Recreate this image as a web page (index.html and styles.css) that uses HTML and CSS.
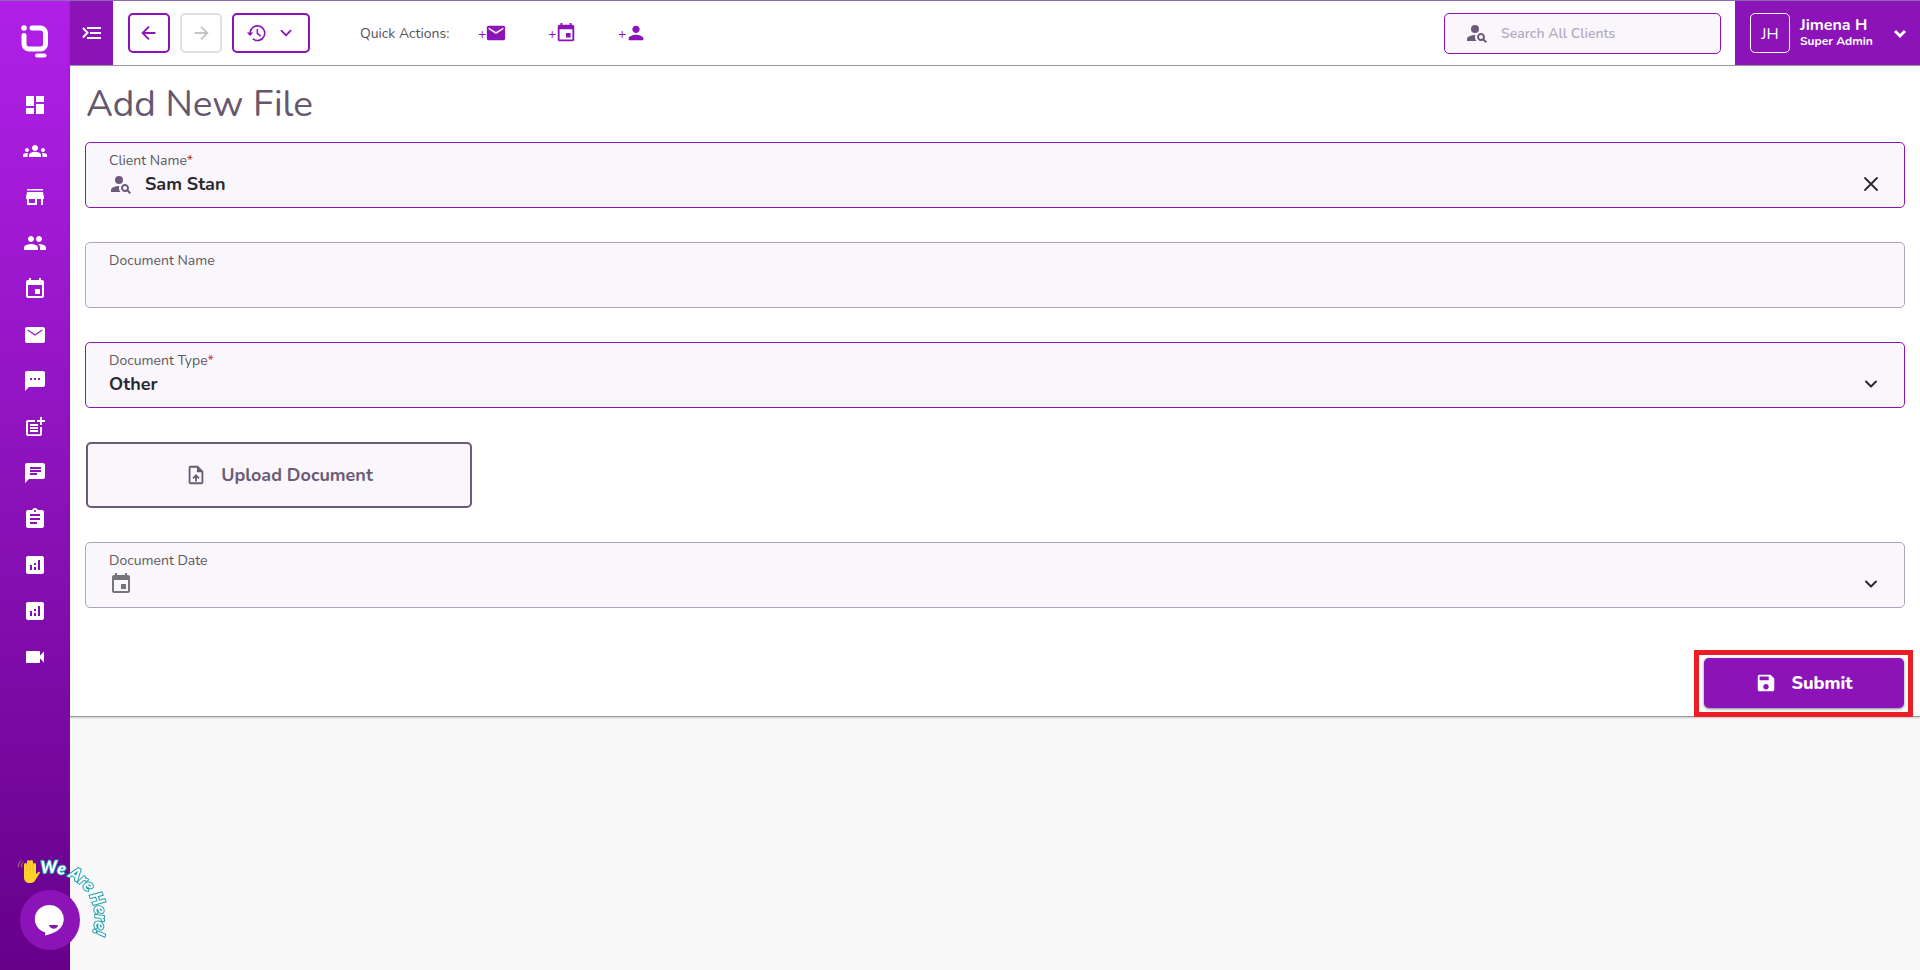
FILE: index.html
```html
<!DOCTYPE html>
<html lang="en">
<head>
    <meta charset="UTF-8">
    <meta name="viewport" content="width=device-width, initial-scale=1.0">
    <title>Add New File</title>
    <link rel="stylesheet" href="styles.css">
</head>
<body>
    <!-- shared icons -->
    <svg class="icon-defs" aria-hidden="true">
        <symbol id="i-mail" viewBox="0 0 24 24"><path d="M20 4H4c-1.1 0-2 .9-2 2v12c0 1.1.9 2 2 2h16c1.1 0 2-.9 2-2V6c0-1.1-.9-2-2-2zm0 4l-8 5-8-5V6l8 5 8-5v2z"/></symbol>
        <symbol id="i-mail-thin" viewBox="0 0 24 24"><path d="M20 4H4c-1.1 0-2 .9-2 2v12c0 1.1.9 2 2 2h16c1.1 0 2-.9 2-2V6c0-1.1-.9-2-2-2zm-.4 3.600L12 12.700 4.400 7.600l.6-1L12 11.200l7-4.600z"/></symbol>
        <symbol id="i-event" viewBox="0 0 24 24"><path d="M17 12h-5v5h5v-5zM16 1v2H8V1H6v2H5c-1.110 0-1.990.9-1.990 2L3 19c0 1.100.89 2 2 2h14c1.100 0 2-.9 2-2V5c0-1.100-.9-2-2-2h-1V1h-2zm3 18H5V8h14v11z"/></symbol>
        <symbol id="i-person" viewBox="0 0 24 24"><path d="M12 12c2.210 0 4-1.790 4-4s-1.790-4-4-4-4 1.790-4 4 1.790 4 4 4zm0 2c-2.670 0-8 1.340-8 4v2h16v-2c0-2.660-5.330-4-8-4z"/></symbol>
        <symbol id="i-person-search" viewBox="0 0 24 24"><circle cx="10" cy="8" r="4"/><path d="M10.350 14.010C7.620 13.910 2 15.270 2 18v2h9.540c-2.470-2.760-1.230-5.890-1.190-5.990zM19.430 18.020c.36-.59.57-1.280.57-2.020 0-2.210-1.790-4-4-4s-4 1.790-4 4 1.790 4 4 4c.74 0 1.430-.22 2.020-.57L20.590 22 22 20.590l-2.570-2.570zM16 18c-1.100 0-2-.9-2-2s.9-2 2-2 2 .9 2 2-.9 2-2 2z"/></symbol>
        <symbol id="i-chevron" viewBox="0 0 24 24"><path d="M7 9.500l5 5 5-5" fill="none" stroke="currentColor" stroke-width="2" stroke-linecap="round" stroke-linejoin="round"/></symbol>
        <symbol id="i-chart" viewBox="0 0 24 24"><path d="M19 3H5c-1.100 0-2 .9-2 2v14c0 1.100.9 2 2 2h14c1.100 0 2-.9 2-2V5c0-1.100-.9-2-2-2zM9 17H7v-5h2v5zm4 0h-2v-3h2v3zm0-5h-2v-2h2v2zm4 5h-2V7h2v10z"/></symbol>
    </svg>

    <aside class="sidebar">
        <a href="#" class="logo" aria-label="Home">
            <svg width="28" height="34" viewBox="0 0 28 34">
                <g fill="none" stroke="#fff" stroke-width="5" stroke-linecap="round">
                    <path d="M3 10.500v8.500a5 5 0 0 0 5 5h11.500a5 5 0 0 0 5-5V8a5 5 0 0 0-5-5h-8.500"/>
                    <path d="M16 30.500h7.500" stroke-width="4"/>
                </g>
                <circle cx="3" cy="3" r="2.800" fill="#fff"/>
            </svg>
        </a>
        <nav class="side-nav">
            <a href="#" aria-label="Dashboard"><svg class="icon" viewBox="0 0 24 24"><path d="M3 13h8V3H3v10zm0 8h8v-6H3v6zm10 0h8V11h-8v10zm0-18v6h8V3h-8z"/></svg></a>
            <a href="#" aria-label="Groups"><svg class="icon" viewBox="0 0 24 24"><path d="M12 12.750c1.630 0 3.070.39 4.240.9 1.080.48 1.760 1.560 1.760 2.730V18H6v-1.610c0-1.180.68-2.260 1.760-2.730 1.170-.52 2.610-.91 4.240-.91zM4 13c1.100 0 2-.9 2-2s-.9-2-2-2-2 .9-2 2 .9 2 2 2zm1.130 1.100C4.760 14.040 4.390 14 4 14c-.99 0-1.930.21-2.780.58C.48 14.900 0 15.620 0 16.430V18h4.500v-1.610c0-.83.23-1.610.63-2.290zM20 13c1.100 0 2-.9 2-2s-.9-2-2-2-2 .9-2 2 .9 2 2 2zm4 3.430c0-.81-.48-1.530-1.220-1.850-.85-.37-1.790-.58-2.780-.58-.39 0-.76.04-1.130.1.400.68.630 1.460.630 2.290V18H24v-1.570zM12 6c1.660 0 3 1.340 3 3s-1.340 3-3 3-3-1.340-3-3 1.340-3 3-3z"/></svg></a>
            <a href="#" aria-label="Store"><svg class="icon" viewBox="0 0 24 24"><path d="M4 4h16v1.600H4zM20 7H4l-1 5v2h1v6h10v-6h4v6h2v-6h1v-2l-1-5zm-8 11H6v-4h6v4z"/></svg></a>
            <a href="#" aria-label="People"><svg class="icon" viewBox="0 0 24 24"><path d="M16 11c1.660 0 2.990-1.340 2.990-3S17.660 5 16 5s-3 1.340-3 3 1.340 3 3 3zm-8 0c1.660 0 2.990-1.340 2.990-3S9.660 5 8 5 5 6.340 5 8s1.340 3 3 3zm0 2c-2.330 0-7 1.170-7 3.500V19h14v-2.500c0-2.330-4.670-3.500-7-3.500zm8 0c-.29 0-.62.02-.97.05 1.160.84 1.970 1.970 1.970 3.450V19h6v-2.500c0-2.330-4.670-3.500-7-3.500z"/></svg></a>
            <a href="#" aria-label="Calendar"><svg class="icon"><use href="#i-event"/></svg></a>
            <a href="#" aria-label="Mail"><svg class="icon"><use href="#i-mail-thin"/></svg></a>
            <a href="#" aria-label="Messages"><svg class="icon" viewBox="0 0 24 24"><path d="M20 2H4c-1.100 0-2 .9-2 2v18l4-4h14c1.100 0 2-.9 2-2V4c0-1.100-.9-2-2-2zM9 11H7V9h2v2zm4 0h-2V9h2v2zm4 0h-2V9h2v2z"/></svg></a>
            <a href="#" aria-label="New post"><svg class="icon" viewBox="0 0 24 24"><path d="M17 19.220H5V7h7V5H5c-1.100 0-2 .9-2 2v12c0 1.100.9 2 2 2h12c1.100 0 2-.9 2-2v-7h-2v7.220zM19 2h-2v3h-3v2h3v2.990h2V7h3V5h-3V2zM7 9h8v2H7zM7 12h8v2H7zM7 15h8v2H7z"/></svg></a>
            <a href="#" aria-label="Chat"><svg class="icon" viewBox="0 0 24 24"><path d="M20 2H4c-1.100 0-2 .9-2 2v18l4-4h14c1.100 0 2-.9 2-2V4c0-1.100-.9-2-2-2zM7 6h11v2H7zM7 9h11v2H7zM14 14H7v-2h7v2z" fill-rule="evenodd"/></svg></a>
            <a href="#" aria-label="Tasks"><svg class="icon" viewBox="0 0 24 24"><path d="M19 3h-4.180C14.400 1.840 13.300 1 12 1s-2.400.84-2.820 2H5c-1.100 0-2 .9-2 2v14c0 1.100.9 2 2 2h14c1.100 0 2-.9 2-2V5c0-1.100-.9-2-2-2zm-7 0c.55 0 1 .45 1 1s-.45 1-1 1-1-.45-1-1 .45-1 1-1zm2 14H7v-2h7v2zm3-4H7v-2h10v2zm0-4H7V7h10v2z"/></svg></a>
            <a href="#" aria-label="Reports"><svg class="icon"><use href="#i-chart"/></svg></a>
            <a href="#" aria-label="Analytics"><svg class="icon"><use href="#i-chart"/></svg></a>
            <a href="#" aria-label="Video"><svg class="icon" viewBox="0 0 24 24"><path d="M17 10.500V7c0-.55-.45-1-1-1H4c-.55 0-1 .45-1 1v10c0 .55.45 1 1 1h12c.55 0 1-.45 1-1v-3.500l4 4v-11l-4 4z"/></svg></a>
        </nav>
    </aside>

    <div class="page">
        <header class="header">
            <button type="button" class="menu-toggle" aria-label="Toggle menu">
                <svg width="20" height="14" viewBox="0 0 20 14" fill="none" stroke="#fff" stroke-width="2"><path d="M1 2l4.500 4.700L1 11.500M5 2h14M8 7h11M5 12h14"/></svg>
            </button>
            <div class="history-buttons">
                <button type="button" class="nav-button" aria-label="Back"><svg class="icon" viewBox="0 0 24 24"><path d="M19 12H6M12 5l-7 7 7 7" fill="none" stroke="currentColor" stroke-width="2"/></svg></button>
                <button type="button" class="nav-button" aria-label="Forward" disabled><svg class="icon" viewBox="0 0 24 24"><path d="M5 12h13M12 5l7 7-7 7" fill="none" stroke="currentColor" stroke-width="2"/></svg></button>
                <button type="button" class="nav-button nav-history" aria-label="History">
                    <svg class="icon" viewBox="0 0 24 24"><path d="M5.500 12.500a8 8 0 1 1 3 6M13.500 7.500v5l3.500 3" fill="none" stroke="currentColor" stroke-width="1.700"/><path d="M2 11.500h7l-3.500 3.800z"/></svg>
                    <svg class="icon"><use href="#i-chevron"/></svg>
                </button>
            </div>
            <div class="quick-actions">
                <span class="quick-label">Quick Actions:</span>
                <button type="button" aria-label="New email"><span>+</span><svg class="icon-sm"><use href="#i-mail"/></svg></button>
                <button type="button" aria-label="New event"><span>+</span><svg class="icon-sm"><use href="#i-event"/></svg></button>
                <button type="button" aria-label="New client"><span>+</span><svg class="icon-sm"><use href="#i-person"/></svg></button>
            </div>
            <label class="search">
                <svg class="icon"><use href="#i-person-search"/></svg>
                <input type="search" placeholder="Search All Clients" aria-label="Search All Clients">
            </label>
            <button type="button" class="user-menu">
                <span class="avatar">JH</span>
                <span class="user-text">
                    <span class="user-name">Jimena H</span>
                    <span class="user-role">Super Admin</span>
                </span>
                <svg class="icon" viewBox="0 0 24 24"><path d="M7 10l5 5 5-5" fill="none" stroke="currentColor" stroke-width="3"/></svg>
            </button>
        </header>

        <main class="panel">
            <h1>Add New File</h1>
            <form class="file-form">
                <div class="field active">
                    <label for="client-name">Client Name<span class="required">*</span></label>
                    <div class="field-row">
                        <svg class="icon field-icon"><use href="#i-person-search"/></svg>
                        <input type="text" id="client-name" value="Sam Stan">
                        <button type="button" class="clear" aria-label="Clear client"><svg class="icon" viewBox="0 0 24 24"><path d="M6 6l12 12M18 6L6 18" fill="none" stroke="currentColor" stroke-width="1.800" stroke-linecap="round"/></svg></button>
                    </div>
                </div>
                <div class="field">
                    <label for="document-name">Document Name</label>
                    <div class="field-row">
                        <input type="text" id="document-name">
                    </div>
                </div>
                <div class="field active">
                    <label for="document-type">Document Type<span class="required">*</span></label>
                    <div class="field-row">
                        <select id="document-type">
                            <option>Other</option>
                        </select>
                        <svg class="icon"><use href="#i-chevron"/></svg>
                    </div>
                </div>
                <button type="button" class="upload">
                    <svg class="icon-sm" viewBox="0 0 24 24"><path d="M14 2H6c-1.100 0-2 .9-2 2v16c0 1.100.9 2 2 2h12c1.100 0 2-.9 2-2V8l-6-6zm4 18H6V4h7v5h5v11zM8 15.010l1.410 1.410L11 14.840V19h2v-4.160l1.590 1.590L16 15.010 12.010 11 8 15.010z"/></svg>
                    Upload Document
                </button>
                <div class="field">
                    <label for="document-date">Document Date</label>
                    <div class="field-row">
                        <svg class="icon date-icon"><use href="#i-event"/></svg>
                        <input type="text" id="document-date">
                        <svg class="icon"><use href="#i-chevron"/></svg>
                    </div>
                </div>
                <div class="submit-frame">
                    <button type="submit" class="submit">
                        <svg class="icon-sm" viewBox="0 0 24 24"><path d="M17 3H5c-1.110 0-2 .9-2 2v14c0 1.100.89 2 2 2h14c1.100 0 2-.9 2-2V7l-4-4zm-5 16c-1.660 0-3-1.340-3-3s1.340-3 3-3 3 1.340 3 3-1.340 3-3 3zm3-10H5V5h10v4z"/></svg>
                        Submit
                    </button>
                </div>
            </form>
        </main>
    </div>

    <!-- chat bubble -->
    <button type="button" class="chat-widget" aria-label="Open chat">
        <svg width="130" height="130" viewBox="0 0 130 130">
            <circle cx="50" cy="80" r="30" fill="#8b13b8"/>
            <path d="M50 65a14 14 0 0 1 7 26c-4 2.500-8 3.500-12 4.500l.3-3A14 14 0 0 1 50 65z" fill="#fff"/>
            <path d="M49 85h9c-.5 5-8 5-9 0z" fill="#8b13b8"/>
            <g fill="#fdd22b">
                <rect x="24" y="23" width="3" height="14" rx="1.500"/>
                <rect x="27" y="20" width="3" height="16" rx="1.500"/>
                <rect x="30" y="20" width="3" height="16" rx="1.500"/>
                <rect x="33" y="23" width="3" height="14" rx="1.500"/>
                <path d="M24 29l12 2v3l2.500-2c1-.5 2 0 1.200 1.200L36 39c-1.500 3-3 4-6 4-4 0-6-2-6-6z"/>
            </g>
            <path d="M27 24v7M30 23v8M33 24v7" stroke="#e5a91c" stroke-width=".5"/>
            <path d="M18.500 27c0-3 1-5.500 3-7M21.500 27c0-2.500.5-4 2-5.500" fill="none" stroke="#c59a55" stroke-width=".8"/>
            <path id="chat-arc" d="M41 34A45 45 0 0 1 87 104" fill="none"/>
            <text class="chat-text"><textPath href="#chat-arc">We Are Here!</textPath></text>
        </svg>
    </button>
</body>
</html>
```
FILE: styles.css
```css
* {
    box-sizing: border-box;
}
body {
    margin: 0;
    min-height: 100vh;
    display: flex;
    border-top: 1px solid #8c68b4;
    background-color: #f9f9f9;
    color: #2b2730;
    font-family: Nunito, "Open Sans", "Noto Sans", sans-serif;
    font-size: 14px;
}
button, input, select {
    font-family: inherit;
    font-size: inherit;
    color: inherit;
    margin: 0;
    padding: 0;
    border: none;
    background: none;
    min-width: 0;
}
button {
    cursor: pointer;
}
.icon-defs {
    position: absolute;
    width: 0;
    height: 0;
}
.icon, .icon-sm {
    display: block;
    flex: none;
    width: 24px;
    height: 24px;
    fill: currentColor;
}
.icon-sm {
    width: 22px;
    height: 22px;
}

/* sidebar */
.sidebar {
    flex: none;
    width: 70px;
    background: linear-gradient(#b020e8, #8c12ba 50%, #660089);
    color: white;
}
.logo {
    display: flex;
    justify-content: center;
    padding-top: 24px;
}
.side-nav {
    display: flex;
    flex-direction: column;
    align-items: center;
    gap: 22px;
    padding-top: 34px;
}
.side-nav a {
    color: white;
}

/* header */
.page {
    flex: 1;
    min-width: 0;
}
.header {
    display: flex;
    align-items: center;
    height: 65px;
    background-color: white;
    border-bottom: 1px solid #999;
    box-shadow: 0 1px 2px rgba(0, 0, 0, 0.2);
}
.menu-toggle {
    display: flex;
    align-items: center;
    justify-content: center;
    align-self: stretch;
    width: 43px;
    background-color: #8b13b8;
}
.history-buttons {
    display: flex;
    gap: 10px;
    margin-left: 15px;
}
.nav-button {
    display: flex;
    align-items: center;
    justify-content: center;
    width: 42px;
    height: 40px;
    border: 2px solid #8b13b8;
    border-radius: 5px;
    color: #8b13b8;
}
.nav-button .icon {
    width: 22px;
}
.nav-button:disabled {
    border-color: #e0e0e0;
    color: #c4c4c4;
}
.nav-history {
    width: 78px;
    gap: 8px;
}
.quick-actions {
    display: flex;
    align-items: center;
    margin-left: 50px;
}
.quick-label {
    width: 118px;
    color: #55505a;
}
.quick-actions button {
    display: flex;
    align-items: center;
    width: 70px;
    color: #8b13b8;
}
.quick-actions .icon-sm {
    margin-left: -1px;
}
.search {
    display: flex;
    align-items: center;
    gap: 12px;
    width: 277px;
    height: 41px;
    margin-left: auto;
    margin-right: 14px;
    padding: 0 20px;
    border: 1px solid #8b13b8;
    border-radius: 5px;
    background-color: #f9f7fb;
    color: #6d5a7b;
}
.search input {
    flex: 1;
    outline: none;
}
.search input::placeholder {
    color: #b5a9bf;
    font-weight: 600;
}
.user-menu {
    display: flex;
    align-items: center;
    align-self: stretch;
    width: 185px;
    padding: 0 8px 0 15px;
    background-color: #8b13b8;
    color: white;
    text-align: left;
}
.avatar {
    width: 40px;
    height: 40px;
    border: 1px solid white;
    border-radius: 5px;
    font-size: 16px;
    line-height: 40px;
    text-align: center;
}
.user-text {
    flex: 1;
    margin-left: 10px;
    padding-bottom: 2px;
    font-weight: 700;
    white-space: nowrap;
}
.user-name, .user-role {
    display: block;
    font-size: 16px;
    line-height: 18px;
}
.user-role {
    font-size: 12px;
    line-height: 14px;
}

/* form panel */
.panel {
    padding: 14px 15px 0;
    background-color: white;
    border-bottom: 1px solid #999;
    box-shadow: 0 1px 2px rgba(0, 0, 0, 0.2);
}
h1 {
    margin: 0 0 14px 1px;
    color: #655770;
    font-size: 37px;
    font-weight: 400;
    line-height: 48px;
}
.file-form {
    display: flex;
    flex-direction: column;
    gap: 34px;
}
.field {
    padding: 8px 21px 11px 23px;
    border: 1px solid #b0a4bb;
    border-radius: 5px;
    background-color: #f9f7fb;
}
.field.active {
    border-color: #8b13b8;
}
.field label {
    display: block;
    color: #5c5762;
    line-height: 20px;
}
.required {
    color: #c4353f;
}
.field-row {
    display: flex;
    align-items: center;
    gap: 12px;
    height: 24px;
    margin-top: 1px;
}
.field-row input, .field-row select {
    flex: 1;
    height: 24px;
    font-size: 18px;
    font-weight: 700;
    line-height: 24px;
    outline: none;
    appearance: none;
}
.field-icon {
    color: #6d5a7b;
}
.date-icon {
    color: #757575;
}
.upload {
    display: flex;
    align-items: center;
    justify-content: center;
    gap: 14px;
    width: 386px;
    height: 66px;
    margin-left: 1px;
    border: 2px solid #6b5b75;
    border-radius: 5px;
    background-color: #f9f7fb;
    color: #6b5b75;
    font-size: 18px;
    font-weight: 700;
}
.submit-frame {
    align-self: flex-end;
    margin: 8px -8px -1px 0;
    padding: 3px 4px 4px 5px;
    border: 5px solid #ee1c25;
}
.submit {
    display: flex;
    align-items: center;
    justify-content: center;
    gap: 14px;
    width: 200px;
    height: 50px;
    border-radius: 5px;
    background-color: #8b13b8;
    box-shadow: 0 1px 3px rgba(0, 0, 0, 0.5);
    color: white;
    font-size: 18px;
    font-weight: 800;
}

/* chat bubble */
.chat-widget {
    position: fixed;
    left: 0;
    bottom: 0;
}
.chat-widget svg {
    display: block;
}
.chat-text {
    fill: white;
    stroke: #1d9fae;
    stroke-width: 2px;
    paint-order: stroke;
    font-family: Lato, sans-serif;
    font-size: 17px;
    font-style: italic;
    font-weight: 900;
}
```
